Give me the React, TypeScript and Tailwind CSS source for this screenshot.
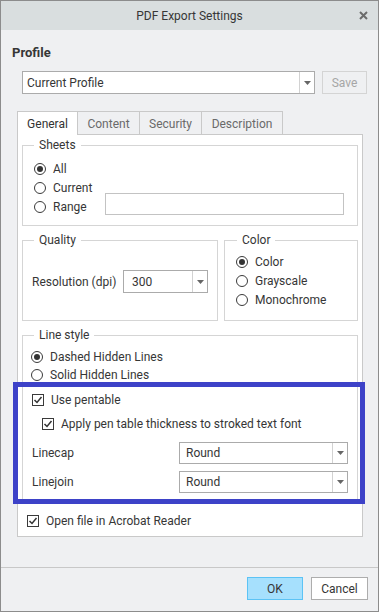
import React from 'react';

const Radio: React.FC<{ checked?: boolean; label: string }> = ({ checked, label }) => (
  <div className="flex items-center gap-[7px]">
    <span className="w-[12px] h-[12px] rounded-full border border-[#3a3a3a] bg-white flex items-center justify-center">
      {checked && <span className="w-[6px] h-[6px] rounded-full bg-[#333]" />}
    </span>
    <span>{label}</span>
  </div>
);

const Check: React.FC<{ label: string }> = ({ label }) => (
  <div className="flex items-center gap-[7px]">
    <span className="w-[12px] h-[12px] border border-[#3a3a3a] bg-white flex items-center justify-center">
      <svg width="10" height="10" viewBox="0 0 10 10">
        <polyline points="1.5,5 4,7.5 8.5,2" fill="none" stroke="#333" strokeWidth="1.5" />
      </svg>
    </span>
    <span>{label}</span>
  </div>
);

const Combo: React.FC<{ value: string; className: string; pad?: string }> = ({ value, className, pad = 'pl-[6px]' }) => (
  <div className={`flex border border-[#ababab] bg-white ${className}`}>
    <div className={`flex-1 flex items-center ${pad}`}>{value}</div>
    <div className="w-[15px] border-l border-[#d2d2d2] flex items-center justify-center">
      <svg width="7" height="4" viewBox="0 0 7 4">
        <polygon points="0,0 7,0 3.5,4" fill="#666" />
      </svg>
    </div>
  </div>
);

const Group: React.FC<{ title: string; className?: string; legendMl?: string; children: React.ReactNode }> = ({
  title,
  className = '',
  legendMl = 'ml-[11px]',
  children,
}) => (
  <fieldset className={`border border-[#d5d5d5] min-w-0 ${className}`}>
    <legend className={`${legendMl} px-[5px] leading-[16px]`}>{title}</legend>
    {children}
  </fieldset>
);

const tabs = [
  { name: 'General', w: 'w-[61px]', active: true },
  { name: 'Content', w: 'w-[62px]' },
  { name: 'Security', w: 'w-[62px]' },
  { name: 'Description', w: 'w-[81px]' },
];

export default function App() {
  return (
    <div className="relative w-[379px] h-[612px] border border-[#8c8c8c] bg-[#eff0f2] flex flex-col text-[12px] leading-[16px] text-[#363636] font-[Roboto,'Liberation_Sans',sans-serif]">
      {/* title bar */}
      <div className="h-[29px] bg-[#d9dedf] flex items-center justify-center relative">
        <span>PDF Export Settings</span>
        <svg className="absolute right-[10px] top-[10px]" width="9" height="9" viewBox="0 0 9 9">
          <path d="M1 1 L8 8 M8 1 L1 8" stroke="#6b6b6b" strokeWidth="2" />
        </svg>
      </div>

      <div className="flex-1 px-[11px]">
        <div className="mt-[15px] font-bold text-[13px]">Profile</div>
        <div className="mt-[10px] ml-[10px] flex gap-[7px]">
          <Combo value="Current Profile" className="w-[294px] h-[23px]" pad="pl-[4px]" />
          <div className="w-[45px] h-[23px] border border-[#d4d4d4] text-[#a6a6a6] flex items-center justify-center">
            Save
          </div>
        </div>

        <div className="mt-[17px] ml-[5px] w-[346px]">
          <div className="flex relative z-10 -mb-px">
            {tabs.map((t, i) => (
              <div
                key={t.name}
                className={`${t.w} h-[24px] border-t border-r border-[#c9c9c9] flex items-center justify-center pt-px ${
                  i === 0 ? 'border-l' : ''
                } ${t.active ? 'bg-white text-[#333]' : 'bg-[#eff0f2] text-[#6a6a6a] border-b'}`}
              >
                {t.name}
              </div>
            ))}
          </div>
          <div className="bg-white border border-[#c9c9c9] px-[4px] pt-[2px] pb-[6px]">
            <Group title="Sheets" className="pb-[9px]">
              <div className="pt-[6px] pl-[11px]">
                <div className="h-[19px] flex items-center">
                  <Radio checked label="All" />
                </div>
                <div className="h-[19px] flex items-center">
                  <Radio label="Current" />
                </div>
                <div className="h-[19px] flex items-center">
                  <div className="w-[71px]">
                    <Radio label="Range" />
                  </div>
                  <div className="w-[239px] h-[22px] border border-[#c3c3c3] bg-white mb-[5px]" />
                </div>
              </div>
            </Group>

            <div className="mt-[6px] flex gap-[6px]">
              <Group title="Quality" className="w-[196px] pb-[27px]">
                <div className="pt-[22px] pl-[9px] flex items-center h-[45px]">
                  <span className="w-[91px]">Resolution (dpi)</span>
                  <Combo value="300" className="w-[85px] h-[23px]" pad="pl-[8px]" />
                </div>
              </Group>
              <Group title="Color" className="flex-1 pb-[11px]" legendMl="ml-[12px]">
                <div className="pt-[4px] pl-[11px]">
                  <div className="h-[19px] flex items-center">
                    <Radio checked label="Color" />
                  </div>
                  <div className="h-[19px] flex items-center">
                    <Radio label="Grayscale" />
                  </div>
                  <div className="h-[19px] flex items-center">
                    <Radio label="Monochrome" />
                  </div>
                </div>
              </Group>
            </div>

            <Group title="Line style" className="mt-[6px] pb-[8px]">
              <div className="pt-[5px] pl-[8px]">
                <div className="h-[18px] flex items-center">
                  <Radio checked label="Dashed Hidden Lines" />
                </div>
                <div className="h-[18px] flex items-center">
                  <Radio label="Solid Hidden Lines" />
                </div>
                <div className="mt-[7px] h-[18px] flex items-center pl-[1px]">
                  <Check label="Use pentable" />
                </div>
                <div className="mt-[6px] h-[18px] flex items-center pl-[11px]">
                  <Check label="Apply pen table thickness to stroked text font" />
                </div>
                <div className="mt-[9px] flex items-center pl-[1px]">
                  <span className="w-[147px]">Linecap</span>
                  <Combo value="Round" className="w-[169px] h-[22px]" />
                </div>
                <div className="mt-[7px] flex items-center pl-[1px]">
                  <span className="w-[147px]">Linejoin</span>
                  <Combo value="Round" className="w-[169px] h-[22px]" />
                </div>
              </div>
            </Group>

            <div className="mt-[10px] h-[18px] flex items-center pl-[5px]">
              <Check label="Open file in Acrobat Reader" />
            </div>
          </div>
        </div>
      </div>

      {/* footer */}
      <div className="h-[44px] border-t border-[#c8c8c8] flex justify-end gap-[8px] pt-[9px] pr-[10px]">
        <div className="w-[56px] h-[23px] bg-[#a6e0fd] border border-[#5cc3f5] flex items-center justify-center">
          OK
        </div>
        <div className="w-[57px] h-[23px] bg-white border border-[#adadad] flex items-center justify-center">
          Cancel
        </div>
      </div>

      {/* highlight */}
      <div className="absolute left-[12px] top-[381px] w-[352px] h-[122px] border-[5px] border-[#3d42c8] pointer-events-none" />
    </div>
  );
}
